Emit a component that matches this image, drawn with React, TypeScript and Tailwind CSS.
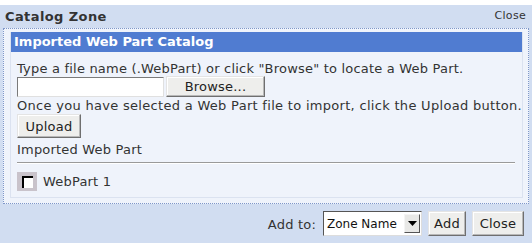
import React from 'react';

const font = "font-['DejaVu_Sans','Verdana',sans-serif]";

const ClassicButton: React.FC<{ label: string; className?: string }> = ({ label, className }) => (
  <button
    type="button"
    className={`bg-[#eeeeec] border border-t-[#e4e4e4] border-l-[#e4e4e4] border-r-[#6f6f6f] border-b-[#6f6f6f] shadow-[inset_-1px_-1px_0_#b8b8b8,inset_1px_1px_0_#ffffff] text-[13px] text-[#222] leading-none tracking-[0.2px] ${className ?? ''}`}
  >
    {label}
  </button>
);

const App: React.FC = () => {
  return (
    <div className={`w-[532px] h-[248px] bg-white pt-[5px] ${font} text-[#333333]`}>
      <div className="bg-[#d1ddf1] h-[238px] flex flex-col">
        {/* zone header */}
        <div className="h-[23px] flex items-center justify-between pl-[5px] pr-[6px]">
          <span className="font-bold text-[13px] tracking-[0.4px]">Catalog Zone</span>
          <span className="text-[11px] tracking-[0.3px] text-[#333]">Close</span>
        </div>

        {/* zone body */}
        <div className="mx-[3px] border border-dotted border-[#7f97c9] bg-[#eff3fb] pt-[3px] pb-[5px] pl-[6px] pr-[5px]">
          <div className="border border-[#dbe2f0] border-t-0">
            <div className="h-[20px] bg-[#507cd1] text-white font-bold text-[13px] flex items-center pl-[3px]">
              Imported Web Part Catalog
            </div>
            <div className="px-[6px] pt-[8px] pb-[6px] text-[13px] tracking-[0.2px]">
              <div className="h-[17px] leading-[17px] whitespace-nowrap">
                Type a file name (.WebPart) or click "Browse" to locate a Web Part.
              </div>
              <div className="h-[21px] flex items-start">
                <div className="w-[147px] h-[20px] bg-white border border-t-[#7a7a7a] border-l-[#7a7a7a] border-r-[#e0e0e0] border-b-[#e0e0e0]" />
                <ClassicButton label="Browse..." className="ml-[2px] w-[99px] h-[21px] -mt-[1px]" />
              </div>
              <div className="h-[16px] leading-[16px] whitespace-nowrap tracking-[0.3px]">
                Once you have selected a Web Part file to import, click the Upload button.
              </div>
              <ClassicButton label="Upload" className="w-[64px] h-[24px] block" />
              <div className="h-[24px] leading-[24px]">Imported Web Part</div>
              <div className="h-[2px] mr-[1px] border-t border-t-[#9a9a9a] border-b border-b-[#ffffff] bg-[#c8c8c8]" />
              <div className="mt-[8px] flex items-center h-[19px]">
                <div className="w-[20px] h-[19px] bg-[#c9c3cb] flex items-center justify-center">
                  <div className="w-[11px] h-[12px] bg-white border-t-2 border-l-2 border-t-black border-l-black" />
                </div>
                <span className="ml-[6px]">WebPart 1</span>
              </div>
            </div>
          </div>
        </div>

        {/* zone footer */}
        <div className="flex-1 flex items-center justify-end pr-[8px] gap-[6px] text-[13px] tracking-[0.2px]">
          <span className="mt-[3px] mr-[1px]">Add to:</span>
          <div className="w-[99px] h-[25px] bg-white border border-t-[#555] border-l-[#555] border-r-[#ddd] border-b-[#ddd] flex items-center justify-between pl-[3px] pr-[1px]">
            <span className="text-[#111] text-[12px] tracking-normal whitespace-nowrap">Zone Name</span>
            <div className="w-[16px] h-[19px] shrink-0 bg-[#e8e8e6] border border-t-[#f4f4f4] border-l-[#f4f4f4] border-r-[#555] border-b-[#555] flex items-center justify-center">
              <svg width="9" height="5" viewBox="0 0 9 5">
                <polygon points="0,0 9,0 4.5,5" fill="#000" />
              </svg>
            </div>
          </div>
          <ClassicButton label="Add" className="w-[38px] h-[25px]" />
          <ClassicButton label="Close" className="w-[52px] h-[25px]" />
        </div>
      </div>
    </div>
  );
};

export default App;
